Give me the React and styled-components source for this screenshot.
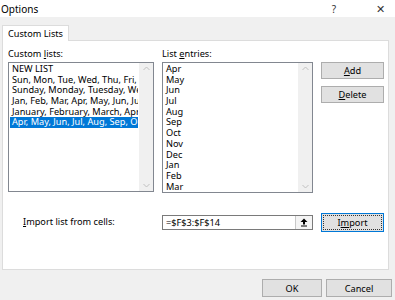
import React from "react";
import styled, { createGlobalStyle } from "styled-components";

const Global = createGlobalStyle`
  html, body { margin: 0; padding: 0; }
  body {
    width: 395px;
    height: 300px;
    overflow: hidden;
    background: #f0f0f0;
    font-family: "Noto Sans", "Open Sans", sans-serif;
    font-size: 9.2px;
    color: #000;
  }
`;

const Window = styled.div`
  width: 395px;
  height: 300px;
  display: flex;
  flex-direction: column;
`;

const TitleBar = styled.div`
  height: 17px;
  background: #fff;
  display: flex;
  align-items: center;
  padding-left: 1px;
  font-size: 10px;
`;

const TitleText = styled.div`
  flex: 1;
`;

const TitleIcon = styled.div`
  width: ${(p) => p.w}px;
  margin-right: ${(p) => p.mr || 0}px;
  text-align: center;
  font-size: ${(p) => p.size}px;
  color: #333;
`;

const TabStrip = styled.div`
  height: 23px;
  display: flex;
  align-items: flex-end;
  padding-left: 2px;
`;

const Tab = styled.div`
  width: 67px;
  height: 16px;
  background: #fff;
  border: 1px solid #dcdcdc;
  border-bottom: none;
  box-sizing: border-box;
  display: flex;
  align-items: center;
  justify-content: center;
  margin-bottom: -1px;
  position: relative;
  z-index: 1;
`;

const Panel = styled.div`
  margin: 0 6px 0 2px;
  height: 230px;
  box-sizing: border-box;
  background: #fff;
  border: 1px solid #dcdcdc;
  padding: 7px 0 0 5px;
  display: grid;
  grid-template-columns: 146px 151px 63px;
  grid-template-rows: auto auto;
  column-gap: 8px;
  align-content: start;
`;

const Column = styled.div`
  display: flex;
  flex-direction: column;
`;

const Label = styled.div`
  height: 12px;
  line-height: 12px;
  margin-bottom: 2px;
  padding-left: ${(p) => p.indent || 0}px;
  white-space: nowrap;
`;

const ListBox = styled.div`
  height: ${(p) => p.h}px;
  box-sizing: border-box;
  border: 1px solid #828790;
  display: flex;
  overflow: hidden;
`;

const ListItems = styled.div`
  flex: 1;
  padding: 1px 1px 0 1px;
  overflow: hidden;
`;

const Row = styled.div`
  height: 10.7px;
  line-height: 10.7px;
  padding-left: 2px;
  white-space: nowrap;
  overflow: hidden;
  background: ${(p) => (p.selected ? "#0078d7" : "transparent")};
  color: ${(p) => (p.selected ? "#fff" : "#000")};
`;

const ScrollBar = styled.div`
  width: 14px;
  background: #f0f0f0;
  display: flex;
  flex-direction: column;
  justify-content: space-between;
  align-items: center;
  padding: 3px 0;
  box-sizing: border-box;
`;

const ButtonColumn = styled.div`
  display: flex;
  flex-direction: column;
  gap: 7px;
  padding-top: 14px;
`;

const Button = styled.button`
  width: ${(p) => p.w || 63}px;
  height: ${(p) => p.h || 17}px;
  box-sizing: border-box;
  background: #e1e1e1;
  border: 1px solid ${(p) => (p.focused ? "#0078d7" : "#adadad")};
  font-family: inherit;
  font-size: 9.2px;
  color: #000;
  padding: 0;
  display: flex;
  align-items: center;
  justify-content: center;
  position: relative;
  ${(p) =>
    p.focused &&
    `
    &::after {
      content: "";
      position: absolute;
      inset: 1px;
      border: 1px dotted #333;
    }
  `}
`;

const ImportRow = styled.div`
  grid-column: 1 / 4;
  display: grid;
  grid-template-columns: 146px 151px 63px;
  column-gap: 8px;
  align-items: center;
  margin-top: 20px;
`;

const RefInput = styled.div`
  height: 15px;
  box-sizing: border-box;
  border: 1px solid #7a7a7a;
  display: flex;
  align-items: stretch;
`;

const RefText = styled.div`
  flex: 1;
  line-height: 13px;
  padding-left: 3px;
`;

const RefButton = styled.div`
  width: 16px;
  border-left: 1px solid #c8c8c8;
  background: #f4f4f4;
  display: flex;
  align-items: center;
  justify-content: center;
`;

const Footer = styled.div`
  flex: 1;
  display: flex;
  justify-content: flex-end;
  align-items: flex-start;
  gap: 4px;
  padding: 9px 3px 0 0;
`;

const U = styled.span`
  text-decoration: underline;
`;

const Chevron = ({ up }) => (
  <svg width="7" height="5" viewBox="0 0 7 5">
    <path
      d={up ? "M0.5 4 L3.5 1 L6.5 4" : "M0.5 1 L3.5 4 L6.5 1"}
      fill="none"
      stroke="#c0c0c0"
      strokeWidth="1"
    />
  </svg>
);

const customLists = [
  "NEW LIST",
  "Sun, Mon, Tue, Wed, Thu, Fri, Sat",
  "Sunday, Monday, Tuesday, Wednesday",
  "Jan, Feb, Mar, Apr, May, Jun, Jul",
  "January, February, March, April",
  "Apr, May, Jun, Jul, Aug, Sep, Oct",
];

const entries = ["Apr", "May", "Jun", "Jul", "Aug", "Sep", "Oct", "Nov", "Dec", "Jan", "Feb", "Mar"];

export default function App() {
  return (
    <>
      <Global />
      <Window>
        <TitleBar>
          <TitleText>Options</TitleText>
          <TitleIcon w={14} mr={24} size={10}>?</TitleIcon>
          <TitleIcon w={30} size={11}>✕</TitleIcon>
        </TitleBar>
        <TabStrip>
          <Tab>Custom Lists</Tab>
        </TabStrip>
        <Panel>
          <Column>
            <Label>
              Custom <U>l</U>ists:
            </Label>
            <ListBox h={130}>
              <ListItems>
                {customLists.map((t, i) => (
                  <Row key={t} selected={i === customLists.length - 1}>
                    {t}
                  </Row>
                ))}
              </ListItems>
              <ScrollBar>
                <Chevron up />
                <Chevron />
              </ScrollBar>
            </ListBox>
          </Column>
          <Column>
            <Label>
              List <U>e</U>ntries:
            </Label>
            <ListBox h={131}>
              <ListItems>
                {entries.map((t) => (
                  <Row key={t}>{t}</Row>
                ))}
              </ListItems>
              <ScrollBar>
                <Chevron up />
                <Chevron />
              </ScrollBar>
            </ListBox>
          </Column>
          <ButtonColumn>
            <Button>
              <U>A</U>dd
            </Button>
            <Button>
              <U>D</U>elete
            </Button>
          </ButtonColumn>
          <ImportRow>
            <Label indent={15}>
              <U>I</U>mport list from cells:
            </Label>
            <RefInput>
              <RefText>=$F$3:$F$14</RefText>
              <RefButton>
                <svg width="8" height="9" viewBox="0 0 8 9">
                  <path d="M4 0.5 L7.5 4 L5 4 L5 6.5 L3 6.5 L3 4 L0.5 4 Z" fill="#000" />
                  <rect x="1" y="7.5" width="6" height="1" fill="#000" />
                </svg>
              </RefButton>
            </RefInput>
            <Button focused h={19}>
              I<U>m</U>port
            </Button>
          </ImportRow>
        </Panel>
        <Footer>
          <Button w={60} h={18}>OK</Button>
          <Button w={66} h={18}>Cancel</Button>
        </Footer>
      </Window>
    </>
  );
}
